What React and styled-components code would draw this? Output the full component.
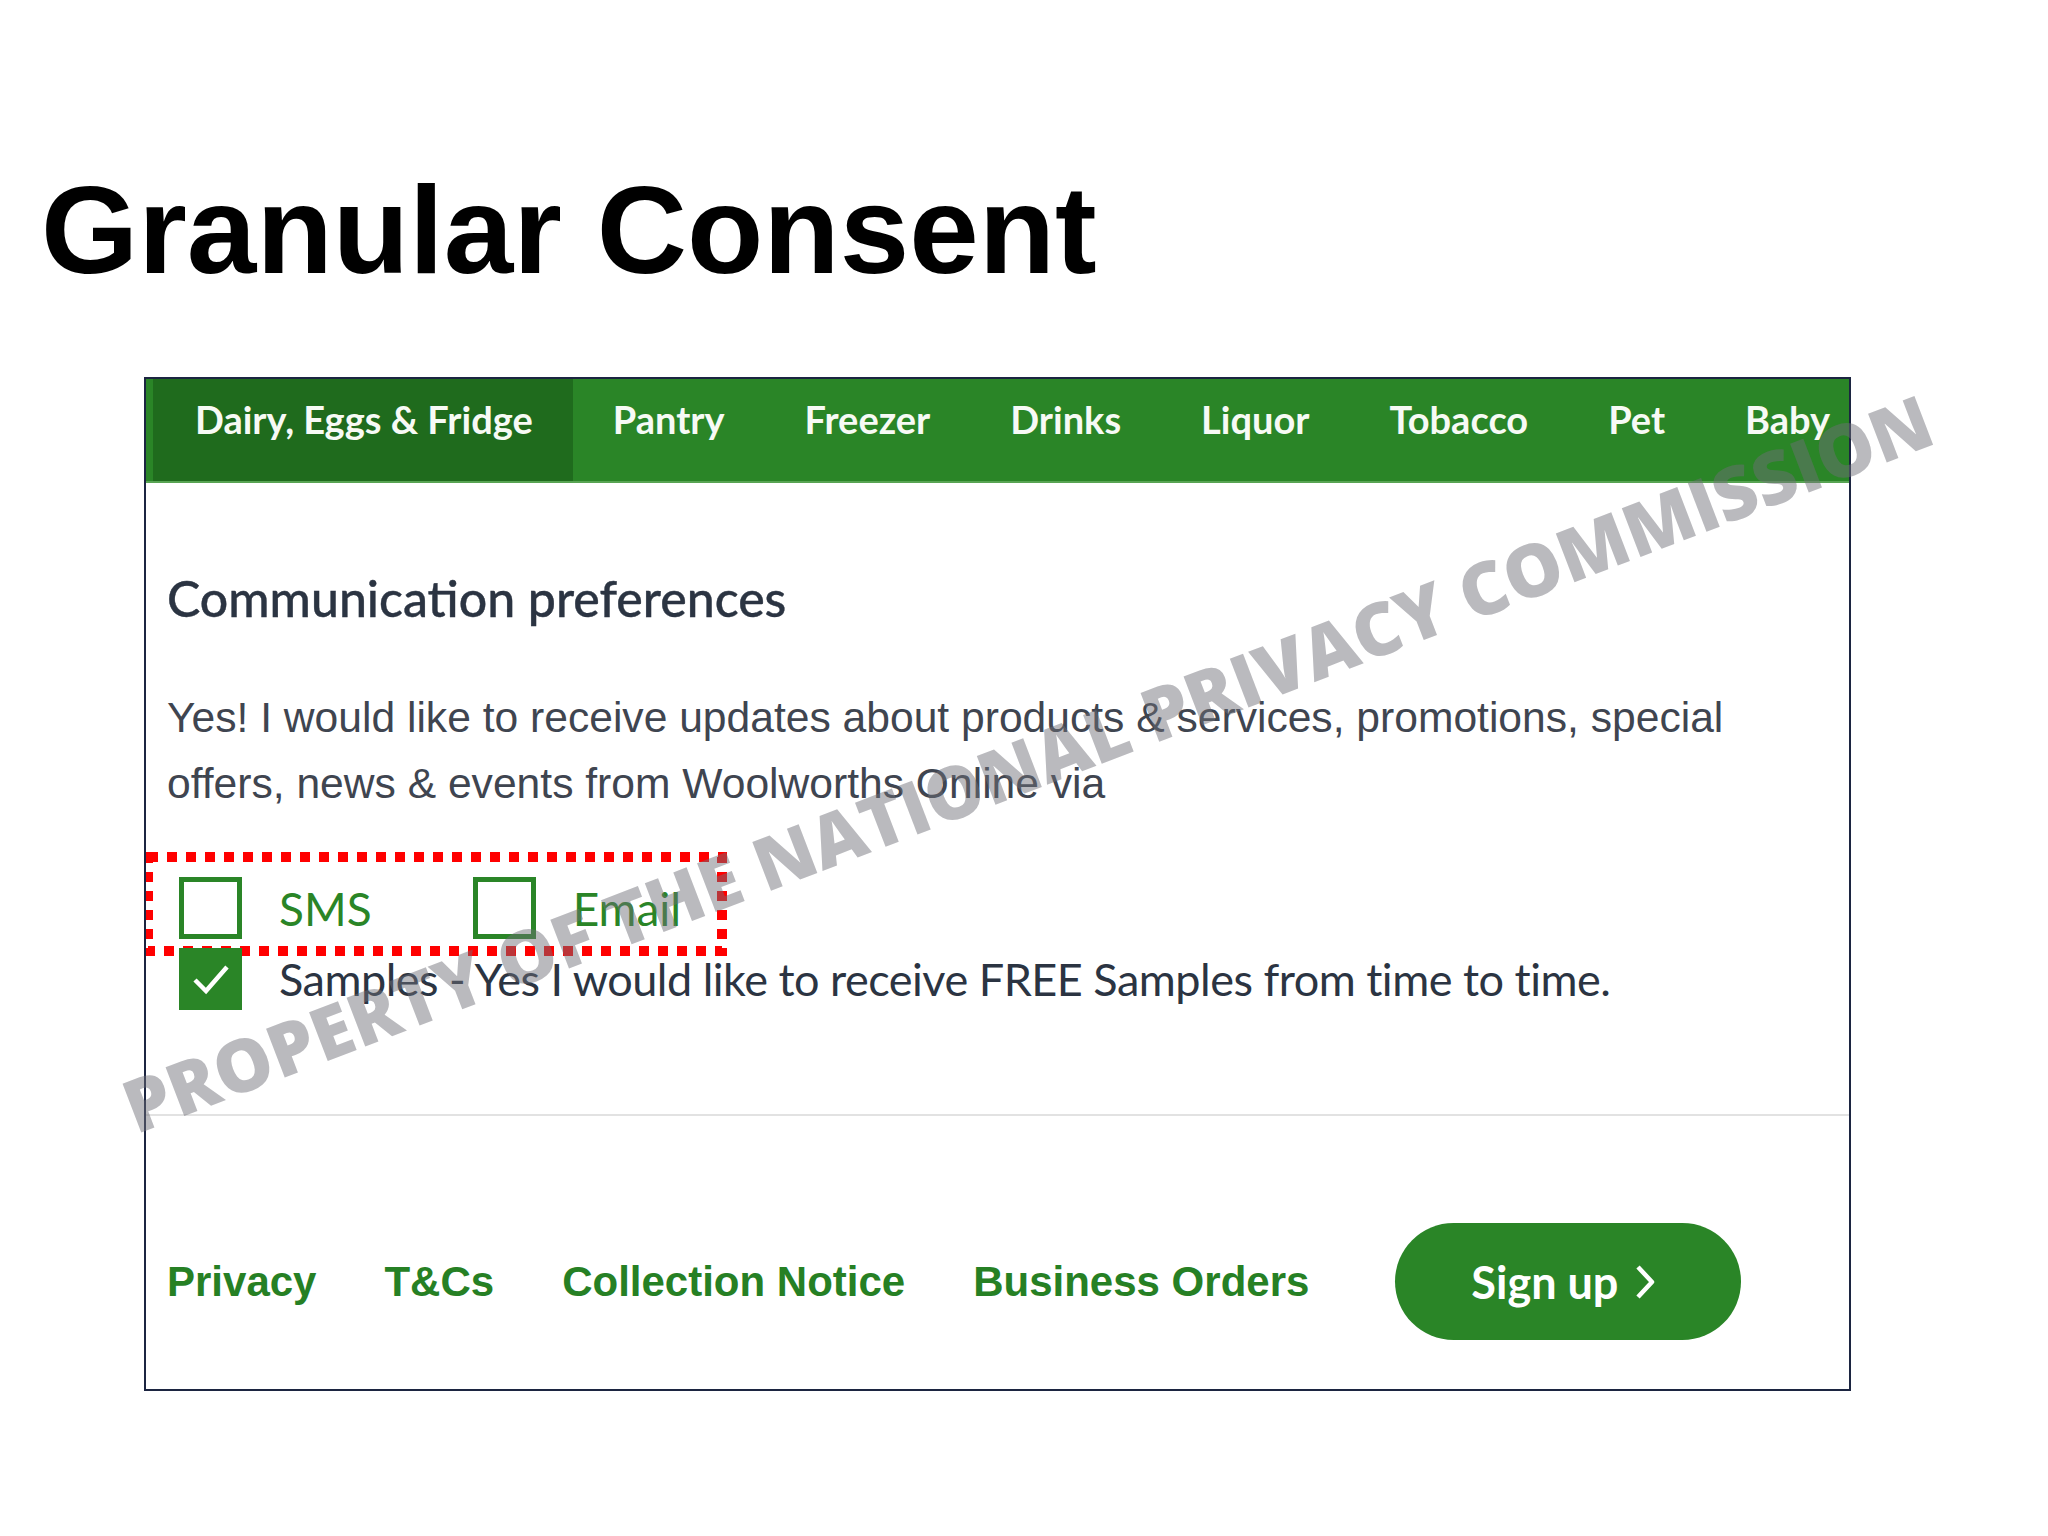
import React from 'react';
import styled, { createGlobalStyle } from 'styled-components';

const GlobalStyle = createGlobalStyle`
    html, body {
        margin: 0;
        padding: 0;
        background: #ffffff;
    }
    body {
        font-family: "Liberation Sans", Arial, sans-serif;
    }
`;

const GREEN = '#2a8527';
const DARK_GREEN = '#1f6b1d';

const Page = styled.div`
    position: relative;
    width: 2048px;
    height: 1536px;
    box-sizing: border-box;
    padding-top: 167px;
    overflow: hidden;
`;

const Title = styled.h1`
    margin: 0 0 0 41px;
    font-family: "Liberation Sans", Arial, sans-serif;
    font-weight: 700;
    font-size: 125px;
    line-height: 125px;
    color: #000000;
`;

const Panel = styled.div`
    margin: 85px 0 0 144px;
    width: 1707px;
    height: 1014px;
    box-sizing: border-box;
    border: 2px solid #1c2541;
    display: flex;
    flex-direction: column;
    overflow: hidden;
    background: #ffffff;
`;

const Nav = styled.nav`
    display: flex;
    flex-shrink: 0;
    height: 104px;
    box-sizing: border-box;
    padding-left: 7px;
    background: ${GREEN};
    border-bottom: 2px solid #58a453;
    overflow: hidden;
`;

const Tab = styled.div`
    flex-shrink: 0;
    padding: 18px 40px 0 ${(p) => (p.$active ? '42px' : '40px')};
    background: ${(p) => (p.$active ? DARK_GREEN : 'transparent')};
    color: #f7faf5;
    font-family: Lato, "Noto Sans", sans-serif;
    font-weight: 700;
    font-size: 38px;
    line-height: 1.2;
    white-space: nowrap;
`;

const Body = styled.div`
    padding: 85px 40px 0 21px;
    display: flex;
    flex-direction: column;
`;

const Heading = styled.h2`
    margin: 0;
    font-family: Lato, "Noto Sans", sans-serif;
    font-weight: 500;
    font-size: 50px;
    line-height: 1.2;
    color: #2b3442;
    -webkit-text-stroke: 0.4px #2b3442;
`;

const Intro = styled.p`
    margin: 56px 0 0;
    max-width: 1640px;
    font-family: "Liberation Sans", Arial, sans-serif;
    font-size: 42.6px;
    line-height: 66px;
    color: #3f4550;
`;

const Options = styled.div`
    margin-top: 61px;
    padding-left: 12px;
    display: flex;
    flex-direction: column;
    gap: 9px;
`;

const OptionRow = styled.div`
    position: relative;
    display: flex;
    align-items: center;
    height: 62px;
`;

const Option = styled.label`
    display: flex;
    align-items: center;
    margin-right: 101px;
`;

const Box = styled.span`
    width: 63px;
    height: 62px;
    box-sizing: border-box;
    border: 5px solid ${GREEN};
    background: ${(p) => (p.$checked ? GREEN : '#ffffff')};
    margin-right: 37px;
    display: flex;
    align-items: center;
    justify-content: center;
    flex-shrink: 0;
`;

const OptionText = styled.span`
    font-family: Lato, "Noto Sans", sans-serif;
    font-size: ${(p) => (p.$tone === 'green' ? '46px' : '45px')};
    letter-spacing: ${(p) => (p.$tone === 'green' ? '0' : '-0.5px')};
    color: ${(p) => (p.$tone === 'green' ? GREEN : '#2b3442')};
    white-space: nowrap;
`;

const Highlight = styled.svg`
    position: absolute;
    left: -36px;
    top: -25px;
    pointer-events: none;
`;

const Divider = styled.div`
    margin-top: 104px;
    height: 2px;
    flex-shrink: 0;
    background: #e2e2e2;
`;

const Footer = styled.div`
    margin-top: 107px;
    padding-left: 21px;
    display: flex;
    align-items: center;
`;

const FooterLink = styled.a`
    margin-right: 68px;
    font-family: "Liberation Sans", Arial, sans-serif;
    font-weight: 700;
    font-size: 42px;
    color: #268024;
    text-decoration: none;
    white-space: nowrap;
`;

const SignUp = styled.button`
    margin-left: 18px;
    width: 346px;
    height: 117px;
    border: none;
    border-radius: 59px;
    background: ${GREEN};
    color: #ffffff;
    padding: 0 0 0 76px;
    display: flex;
    align-items: center;
    gap: 15px;
    font-family: Lato, "Noto Sans", sans-serif;
    font-weight: 700;
    font-size: 45px;
    flex-shrink: 0;
`;

const Watermark = styled.div`
    position: absolute;
    left: 1027px;
    top: 762px;
    transform: translate(-50%, -50%) rotate(-21deg);
    font-family: "Open Sans", "Noto Sans", sans-serif;
    font-weight: 800;
    font-size: 73px;
    color: rgba(110, 110, 120, 0.48);
    white-space: nowrap;
    pointer-events: none;
`;

const tabs = ['Dairy, Eggs & Fridge', 'Pantry', 'Freezer', 'Drinks', 'Liquor', 'Tobacco', 'Pet', 'Baby'];
const links = ['Privacy', 'T&Cs', 'Collection Notice', 'Business Orders'];

const Check = () => (
    <svg width="40" height="32" viewBox="0 0 40 32">
        <path d="M4 17 L15 28 L36 4" fill="none" stroke="#ffffff" strokeWidth="4.5" />
    </svg>
);

const Chevron = () => (
    <svg width="24" height="36" viewBox="0 0 24 36">
        <path d="M5 3 L19 18 L5 33" fill="none" stroke="#ffffff" strokeWidth="4.5" strokeLinejoin="round" />
    </svg>
);

export default function App() {
    return (
        <Page>
            <GlobalStyle />
            <Title>Granular Consent</Title>
            <Panel>
                <Nav>
                    {tabs.map((t, i) => (
                        <Tab key={t} $active={i === 0}>{t}</Tab>
                    ))}
                </Nav>
                <Body>
                    <Heading>Communication preferences</Heading>
                    <Intro>
                        Yes! I would like to receive updates about products &amp; services, promotions, special
                        offers, news &amp; events from Woolworths Online via
                    </Intro>
                    <Options>
                        <OptionRow>
                            <Option>
                                <Box />
                                <OptionText $tone="green">SMS</OptionText>
                            </Option>
                            <Option>
                                <Box />
                                <OptionText $tone="green">Email</OptionText>
                            </Option>
                            {/* red annotation round the two channels */}
                            <Highlight width="584" height="104">
                                <rect x="5" y="5" width="574" height="94" fill="none" stroke="#ff0000" strokeWidth="10" strokeDasharray="10 9" />
                            </Highlight>
                        </OptionRow>
                        <OptionRow>
                            <Option>
                                <Box $checked>
                                    <Check />
                                </Box>
                                <OptionText>Samples - Yes I would like to receive FREE Samples from time to time.</OptionText>
                            </Option>
                        </OptionRow>
                    </Options>
                </Body>
                <Divider />
                <Footer>
                    {links.map((l) => (
                        <FooterLink key={l} href="#">{l}</FooterLink>
                    ))}
                    <SignUp>
                        Sign up
                        <Chevron />
                    </SignUp>
                </Footer>
            </Panel>
            <Watermark>PROPERTY OF THE NATIONAL PRIVACY COMMISSION</Watermark>
        </Page>
    );
}
